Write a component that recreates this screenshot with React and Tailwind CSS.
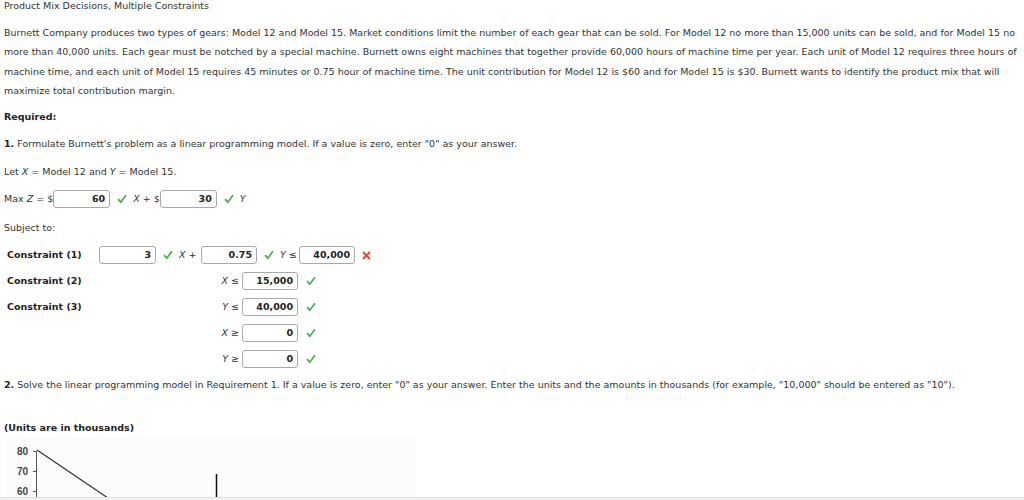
import React from "react";

function Check() {
  return (
    <svg width="10" height="10" viewBox="0 0 10 10" className="inline-block">
      <path d="M1 5.2 L3.8 8.2 L9 1.2" fill="none" stroke="#4caf50" strokeWidth="1.8" />
    </svg>
  );
}

function Cross() {
  return (
    <svg width="9" height="9" viewBox="0 0 9 9" className="inline-block">
      <path d="M1 1 L8 8 M8 1 L1 8" fill="none" stroke="#e8453c" strokeWidth="1.9" />
    </svg>
  );
}

function Box({ value, w = "w-[57px]" }) {
  return (
    <span
      className={`inline-flex h-[18px] ${w} items-center justify-end rounded-[3px] border border-[#a9a9a9] bg-white pr-[4px] font-bold text-[#222]`}
    >
      {value}
    </span>
  );
}

function Rel({ v, sign }) {
  return (
    <span className="flex w-[25px] justify-end pr-[3px]">
      <span>
        <i>{v}</i> {sign}
      </span>
    </span>
  );
}

export default function App() {
  return (
    <div className="min-h-screen bg-white px-[4px] font-['DejaVu_Sans',Verdana,sans-serif] text-[9.5px] text-[#333]">
      {/* Title */}
      <p className="leading-[12px]">Product Mix Decisions, Multiple Constraints</p>

      {/* Problem text */}
      <p className="mt-[11px] leading-[19.4px]">
        Burnett Company produces two types of gears: Model 12 and Model 15. Market conditions limit the number of each
        gear that can be sold. For Model 12 no more than 15,000 units can be sold, and for Model 15 no more than 40,000
        units. Each gear must be notched by a special machine. Burnett owns eight machines that together provide 60,000
        hours of machine time per year. Each unit of Model 12 requires three hours of machine time, and each unit of
        Model 15 requires 45 minutes or 0.75 hour of machine time. The unit contribution for Model 12 is $60 and for
        Model 15 is $30. Burnett wants to identify the product mix that will maximize total contribution margin.
      </p>

      <p className="mt-[6px] font-bold leading-[19px] text-[#222]">Required:</p>

      <p className="mt-[8px] leading-[19px]">
        <b className="text-[#222]">1.</b> Formulate Burnett's problem as a linear programming model. If a value is
        zero, enter "0" as your answer.
      </p>

      <p className="mt-[9px] leading-[19px]">
        Let <i>X</i> = Model 12 and <i>Y</i> = Model 15.
      </p>

      {/* Objective */}
      <div className="mt-[8px] flex h-[20px] items-center">
        <span>
          Max <i>Z</i> = $
        </span>
        <Box value="60" />
        <span className="ml-[7px]">
          <Check />
        </span>
        <span className="ml-[6px]">
          <i>X</i> + $
        </span>
        <Box value="30" w="w-[57px]" />
        <span className="ml-[7px]">
          <Check />
        </span>
        <i className="ml-[6px]">Y</i>
      </div>

      <p className="mt-[9px] leading-[19px]">Subject to:</p>

      {/* Constraints */}
      <div className="mt-[8px] flex flex-col gap-[6px] pl-[3px]">
        <div className="flex h-[20px] items-center">
          <b className="w-[92px] text-[#222]">Constraint (1)</b>
          <Box value="3" />
          <span className="ml-[7px]">
            <Check />
          </span>
          <span className="ml-[6px] w-[22px]">
            <i>X</i> +
          </span>
          <Box value="0.75" w="w-[56px]" />
          <span className="ml-[7px]">
            <Check />
          </span>
          <span className="ml-[6px] w-[19px]">
            <i>Y</i> ≤
          </span>
          <Box value="40,000" w="w-[56px]" />
          <span className="ml-[7px]">
            <Cross />
          </span>
        </div>
        <div className="flex h-[20px] items-center">
          <b className="w-[210px] text-[#222]">Constraint (2)</b>
          <Rel v="X" sign="≤" />
          <Box value="15,000" w="w-[56px]" />
          <span className="ml-[8px]">
            <Check />
          </span>
        </div>
        <div className="flex h-[20px] items-center">
          <b className="w-[210px] text-[#222]">Constraint (3)</b>
          <Rel v="Y" sign="≤" />
          <Box value="40,000" w="w-[56px]" />
          <span className="ml-[8px]">
            <Check />
          </span>
        </div>
        <div className="flex h-[20px] items-center">
          <span className="w-[210px]" />
          <Rel v="X" sign="≥" />
          <Box value="0" w="w-[56px]" />
          <span className="ml-[8px]">
            <Check />
          </span>
        </div>
        <div className="flex h-[20px] items-center">
          <span className="w-[210px]" />
          <Rel v="Y" sign="≥" />
          <Box value="0" w="w-[56px]" />
          <span className="ml-[8px]">
            <Check />
          </span>
        </div>
      </div>

      <p className="mt-[6px] leading-[19px]">
        <b className="text-[#222]">2.</b> Solve the linear programming model in Requirement 1. If a value is zero,
        enter "0" as your answer. Enter the units and the amounts in thousands (for example, "10,000" should be entered
        as "10").
      </p>

      <p className="mt-[24px] font-bold leading-[19px] text-[#222]">(Units are in thousands)</p>

      {/* Chart */}
      <div className="ml-[2px] w-[410px] bg-[#fcfcfc]">
        <svg width="410" height="120" viewBox="0 0 410 120">
          <g fontFamily="'Liberation Sans', Arial, sans-serif" fontWeight="bold" fontSize="10" fill="#444">
            <text x="22" y="17.5" textAnchor="end">80</text>
            <text x="22" y="37.5" textAnchor="end">70</text>
            <text x="22" y="57.5" textAnchor="end">60</text>
          </g>
          <path d="M30.5 14 V120 M27 14.5 H30.5 M27 34.5 H30.5 M27 54.5 H30.5" stroke="#555" strokeWidth="1" fill="none" />
          <path d="M31 13 L130 80" stroke="#333" strokeWidth="1.2" fill="none" />
          <path d="M210.5 37 V120" stroke="#111" strokeWidth="1.5" fill="none" />
        </svg>
      </div>

      <div className="fixed bottom-0 left-0 right-0 h-[3px] border-t border-[#dedede] bg-[#f2f2f2]" />
    </div>
  );
}
